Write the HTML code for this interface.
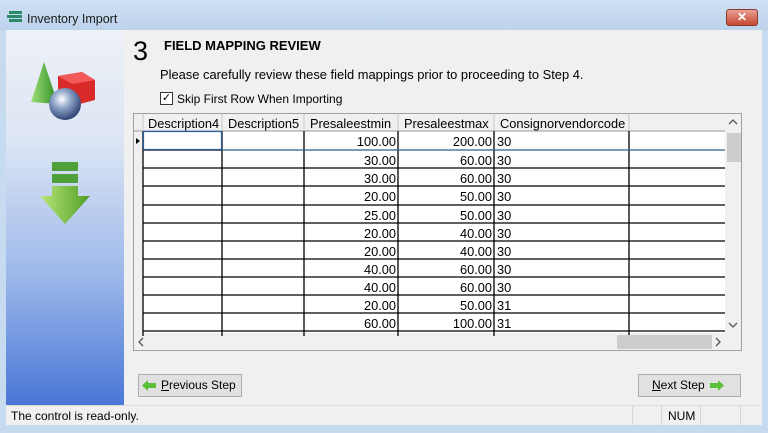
<!DOCTYPE html>
<html><head><style>
*{margin:0;padding:0;box-sizing:border-box}
body{width:768px;height:433px;position:relative;overflow:hidden;font-family:"Liberation Sans",sans-serif;background:#c6daf0}
.abs{position:absolute}
.t{font-size:12px;color:#000;white-space:nowrap}
.g{font-size:12.8px}
</style></head><body>
<div class="abs" style="left:0;top:0;width:768px;height:30px;background:linear-gradient(#cfe0f3,#bcd3ec)"></div>
<div class="abs" style="left:7px;top:10px;width:16px;height:14px">
<div class="abs" style="left:2px;top:1px;width:13px;height:3px;background:#2a8a6a"></div>
<div class="abs" style="left:0;top:5px;width:15px;height:3px;background:#2a8a6a"></div>
<div class="abs" style="left:2px;top:9px;width:13px;height:3px;background:#2a8a6a"></div></div>
<div class="abs t" style="left:27px;top:12px;font-size:12.5px;color:#1a1a1a">Inventory Import</div>
<div class="abs" style="left:726px;top:9px;width:32px;height:17px;border-radius:3px;background:linear-gradient(#e7a196,#c6472f);border:1px solid #8a3a2c;color:#fff;font-size:12px;font-weight:bold;text-align:center;line-height:15px">✕</div>
<div class="abs" style="left:6px;top:30px;width:756px;height:395px;background:#f0f0f0"></div>
<div class="abs" style="left:6px;top:30px;width:118px;height:375px;background:linear-gradient(#eef1f6 0%,#dce5f4 30%,#9db8ea 65%,#4a77d6 100%)"></div>
<svg class="abs" style="left:28px;top:60px" width="72" height="66">
<defs><radialGradient id="s" cx="0.4" cy="0.35" r="0.7"><stop offset="0" stop-color="#fff"/><stop offset="0.4" stop-color="#8fa5c8"/><stop offset="1" stop-color="#24386a"/></radialGradient>
<linearGradient id="c" x1="0" x2="1"><stop offset="0" stop-color="#9fe07a"/><stop offset="1" stop-color="#2b8a20"/></linearGradient></defs>
<polygon points="30,16 54,12 67,20 67,40 44,46 30,36" fill="#d92a2a"/>
<polygon points="30,16 54,12 67,20 44,24" fill="#f25a5a"/>
<polygon points="16,2 3,42 30,44" fill="url(#c)"/>
<circle cx="37" cy="44" r="16" fill="url(#s)"/></svg>
<svg class="abs" style="left:38px;top:160px" width="56" height="70">
<defs><linearGradient id="g" x1="0" x2="1"><stop offset="0" stop-color="#b8e57a"/><stop offset="1" stop-color="#4f9e22"/></linearGradient></defs>
<rect x="14" y="2" width="26" height="9" fill="#4fa03a"/><rect x="14" y="14" width="26" height="9" fill="#4fa03a"/>
<polygon points="14,26 40,26 40,36 52,36 27,64 2,36 14,36" fill="url(#g)"/></svg>
<div class="abs" style="left:133px;top:36px;font-size:27px">3</div>
<div class="abs t" style="left:164px;top:38px;font-weight:bold;font-size:13px">FIELD MAPPING REVIEW</div>
<div class="abs t" style="left:160px;top:67px;font-size:12.9px">Please carefully review these field mappings prior to proceeding to Step 4.</div>
<div class="abs" style="left:160px;top:92px;width:13px;height:13px;border:1px solid #333;background:#fff;font-size:11px;line-height:11px;text-align:center">✓</div>
<div class="abs t" style="left:177px;top:92px">Skip First Row When Importing</div>
<div class="abs" style="left:133px;top:113px;width:609px;height:238px;border:1px solid #a0a0a0;background:#f0f0f0"></div>
<div class="abs" style="left:143px;top:131px;width:582px;height:202px;background:#fff"></div>
<svg class="abs" style="left:0;top:0" width="768" height="433">
<g stroke="#000" stroke-width="1.3">
<line x1="133" y1="131" x2="725" y2="131" stroke="#999" stroke-width="1"/>
<line x1="143" y1="150" x2="725" y2="150"/><line x1="143" y1="168" x2="725" y2="168"/><line x1="143" y1="186" x2="725" y2="186"/><line x1="143" y1="205" x2="725" y2="205"/><line x1="143" y1="223" x2="725" y2="223"/><line x1="143" y1="241" x2="725" y2="241"/><line x1="143" y1="259" x2="725" y2="259"/><line x1="143" y1="277" x2="725" y2="277"/><line x1="143" y1="295" x2="725" y2="295"/><line x1="143" y1="313" x2="725" y2="313"/><line x1="143" y1="331" x2="725" y2="331"/>
<line x1="143" y1="131" x2="143" y2="336"/><line x1="222" y1="131" x2="222" y2="336"/><line x1="304" y1="131" x2="304" y2="336"/><line x1="398" y1="131" x2="398" y2="336"/><line x1="494" y1="131" x2="494" y2="336"/><line x1="629" y1="131" x2="629" y2="336"/>
</g>
<g stroke="#c8c8c8"><line x1="143" y1="114" x2="143" y2="131"/><line x1="222" y1="114" x2="222" y2="131"/><line x1="304" y1="114" x2="304" y2="131"/><line x1="398" y1="114" x2="398" y2="131"/><line x1="494" y1="114" x2="494" y2="131"/><line x1="629" y1="114" x2="629" y2="131"/></g>
<rect x="143.5" y="131.5" width="78" height="18" fill="none" stroke="#2b5c9a" stroke-width="1.2"/>
<line x1="222" y1="150" x2="725" y2="150" stroke="#3a7ab0"/>
<polygon points="136,138 140,141 136,144" fill="#000"/>
<polyline points="729,124 733,120 737,124" fill="none" stroke="#555" stroke-width="1.3"/>
<polyline points="729,323 733,327 737,323" fill="none" stroke="#555" stroke-width="1.3"/>
<polyline points="143,338 139,342 143,346" fill="none" stroke="#555" stroke-width="1.3"/>
<polyline points="716,338 720,342 716,346" fill="none" stroke="#555" stroke-width="1.3"/>
</svg>
<div class="abs t g" style="left:148px;top:116px">Description4</div>
<div class="abs t g" style="left:228px;top:116px">Description5</div>
<div class="abs t g" style="left:310px;top:116px">Presaleestmin</div>
<div class="abs t g" style="left:404px;top:116px">Presaleestmax</div>
<div class="abs t g" style="left:500px;top:116px">Consignorvendorcode</div>
<div id="rows"></div>
<div class="abs" style="left:727px;top:133px;width:14px;height:29px;background:#cdcdcd"></div>
<div class="abs" style="left:617px;top:335px;width:95px;height:14px;background:#cdcdcd"></div>
<div class="abs" style="left:138px;top:374px;width:104px;height:23px;border:1px solid #adadad;background:#e1e1e1"></div>
<svg class="abs" style="left:142px;top:380px" width="15" height="11"><polygon points="0,5.5 6,0 6,3 14,3 14,8 6,8 6,11" fill="#5cbf3a"/></svg>
<div class="abs t" style="left:161px;top:378px"><u>P</u>revious Step</div>
<div class="abs" style="left:638px;top:374px;width:103px;height:23px;border:1px solid #adadad;background:#e1e1e1"></div>
<div class="abs t" style="left:652px;top:378px"><u>N</u>ext Step</div>
<svg class="abs" style="left:710px;top:380px" width="15" height="11"><polygon points="14,5.5 8,0 8,3 0,3 0,8 8,8 8,11" fill="#5cbf3a"/></svg>
<div class="abs" style="left:6px;top:405px;width:756px;height:20px;background:#f0f0f0;border-top:1px solid #dcdcdc"></div>
<div class="abs t" style="left:11px;top:409px">The control is read-only.</div>
<div class="abs" style="left:632px;top:406px;width:1px;height:19px;background:#d6d6d6"></div>
<div class="abs" style="left:661px;top:406px;width:1px;height:19px;background:#d6d6d6"></div>
<div class="abs" style="left:700px;top:406px;width:1px;height:19px;background:#d6d6d6"></div>
<div class="abs" style="left:740px;top:406px;width:1px;height:19px;background:#d6d6d6"></div>
<div class="abs t" style="left:668px;top:409px">NUM</div>
<script>
var d=[["100.00","200.00","30"],["30.00","60.00","30"],["30.00","60.00","30"],["20.00","50.00","30"],["25.00","50.00","30"],["20.00","40.00","30"],["20.00","40.00","30"],["40.00","60.00","30"],["40.00","60.00","30"],["20.00","50.00","31"],["60.00","100.00","31"]];
var tops=[131,150,168,186,205,223,241,259,277,295,313],h="";
d.forEach(function(r,i){var y=tops[i]+3;
h+='<div class="abs t g" style="left:304px;width:92px;text-align:right;top:'+y+'px">'+r[0]+'</div>';
h+='<div class="abs t g" style="left:398px;width:94px;text-align:right;top:'+y+'px">'+r[1]+'</div>';
h+='<div class="abs t g" style="left:497px;top:'+y+'px">'+r[2]+'</div>';});
document.getElementById('rows').innerHTML=h;
</script>
</body></html>
